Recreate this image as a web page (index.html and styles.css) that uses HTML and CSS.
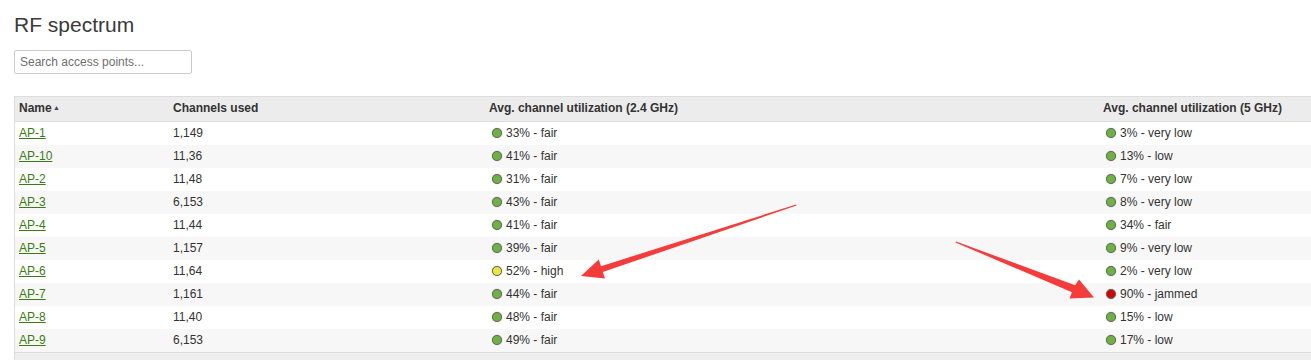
FILE: index.html
```html
<!DOCTYPE html>
<html lang="en">
<head>
<meta charset="utf-8">
<title>RF spectrum</title>
<link rel="stylesheet" href="styles.css">
</head>
<body>
<div class="page">
  <h1 class="title">RF spectrum</h1>
  <input class="search" type="text" placeholder="Search access points...">
  <div class="table-wrap">
    <table class="grid">
      <colgroup>
        <col class="c-name">
        <col class="c-chan">
        <col class="c-u24">
        <col class="c-u5">
      </colgroup>
      <thead>
        <tr>
          <th>Name <span class="sort">&#9650;</span></th>
          <th>Channels used</th>
          <th>Avg. channel utilization (2.4 GHz)</th>
          <th>Avg. channel utilization (5 GHz)</th>
        </tr>
      </thead>
      <tbody>
        <tr><td><a href="#">AP-1</a></td><td>1,149</td><td><span class="dot ok"></span>33% - fair</td><td><span class="dot ok"></span>3% - very low</td></tr>
        <tr><td><a href="#">AP-10</a></td><td>11,36</td><td><span class="dot ok"></span>41% - fair</td><td><span class="dot ok"></span>13% - low</td></tr>
        <tr><td><a href="#">AP-2</a></td><td>11,48</td><td><span class="dot ok"></span>31% - fair</td><td><span class="dot ok"></span>7% - very low</td></tr>
        <tr><td><a href="#">AP-3</a></td><td>6,153</td><td><span class="dot ok"></span>43% - fair</td><td><span class="dot ok"></span>8% - very low</td></tr>
        <tr><td><a href="#">AP-4</a></td><td>11,44</td><td><span class="dot ok"></span>41% - fair</td><td><span class="dot ok"></span>34% - fair</td></tr>
        <tr><td><a href="#">AP-5</a></td><td>1,157</td><td><span class="dot ok"></span>39% - fair</td><td><span class="dot ok"></span>9% - very low</td></tr>
        <tr><td><a href="#">AP-6</a></td><td>11,64</td><td><span class="dot warn"></span>52% - high</td><td><span class="dot ok"></span>2% - very low</td></tr>
        <tr><td><a href="#">AP-7</a></td><td>1,161</td><td><span class="dot ok"></span>44% - fair</td><td><span class="dot bad"></span>90% - jammed</td></tr>
        <tr><td><a href="#">AP-8</a></td><td>11,40</td><td><span class="dot ok"></span>48% - fair</td><td><span class="dot ok"></span>15% - low</td></tr>
        <tr><td><a href="#">AP-9</a></td><td>6,153</td><td><span class="dot ok"></span>49% - fair</td><td><span class="dot ok"></span>17% - low</td></tr>
      </tbody>
      <tfoot>
        <tr><td colspan="4"></td></tr>
      </tfoot>
    </table>
  </div>
  <svg class="annot" width="1311" height="360" viewBox="0 0 1311 360" aria-hidden="true">
    <polygon class="arrow" points="796,204.5 601,266.2 598.8,259.6 581,276 605,278.6 602.8,272 796.5,205.5"/>
    <polygon class="arrow" points="956,241.5 1075.2,285.2 1079,279.5 1094,297.5 1069.5,298.5 1072,292.2 955.5,242.5"/>
  </svg>
</div>
</body>
</html>
```

FILE: styles.css
```css
html, body {
  margin: 0;
  padding: 0;
  background: #fff;
}

body {
  font-family: "Liberation Sans", Arial, sans-serif;
  font-size: 12px;
  color: #333;
}

.page {
  position: relative;
  width: 1311px;
  height: 360px;
  overflow: hidden;
  padding-left: 14px;
  box-sizing: border-box;
}

.title {
  margin: 13px 0 13px 0;
  font-size: 21px;
  line-height: 24px;
  font-weight: normal;
  color: #3a3a3a;
}

.search {
  display: block;
  box-sizing: border-box;
  width: 178px;
  height: 24px;
  margin: 0 0 22px 0;
  padding: 0 5px;
  border: 1px solid #ccc;
  border-radius: 2px;
  font-family: "Liberation Sans", Arial, sans-serif;
  font-size: 12px;
  color: #333;
  outline: none;
}

.search::placeholder {
  color: #6f6f6f;
}

.table-wrap {
  width: 1400px;
}

.grid {
  table-layout: fixed;
  border-collapse: separate;
  border-spacing: 0;
  border: 1px solid #ddd;
  width: 1406px;
}

.c-name { width: 154px; }
.c-chan { width: 316px; }
.c-u24 { width: 614px; }
.c-u5 { width: 320px; }

.grid th {
  text-align: left;
  font-weight: bold;
  color: #333;
  background: #ececec;
  padding: 4px 4px 5px 4px;
  height: 15px;
  line-height: 15px;
  border-bottom: 1px solid #ddd;
  white-space: nowrap;
}

.sort {
  display: inline-block;
  font-size: 7px;
  line-height: 0;
  vertical-align: 2px;
  color: #444;
  margin-left: -2px;
}

.grid td {
  padding: 4px 4px;
  line-height: 15px;
  white-space: nowrap;
  color: #333;
}

.grid tbody tr:nth-child(even) td {
  background: #f7f7f7;
}

.grid a {
  color: #3b7c10;
  text-decoration: underline;
}

.grid tfoot td {
  background: #eeeeee;
  border-top: 1px solid #ddd;
  height: 20px;
  padding: 0;
}

.dot {
  display: inline-block;
  box-sizing: border-box;
  width: 10px;
  height: 10px;
  margin: 0 4px 0 3px;
  border-radius: 50%;
  border: 1px solid #6a6a6a;
  box-shadow: 0 0 1px 0 #777;
  vertical-align: -1px;
}

.dot.ok { background: #6db43f; }
.dot.warn { background: #ebe83a; }
.dot.bad { background: #d40000; }

.annot {
  position: absolute;
  top: 0;
  left: 0;
  pointer-events: none;
}

.arrow {
  fill: #f63b3b;
}
```
